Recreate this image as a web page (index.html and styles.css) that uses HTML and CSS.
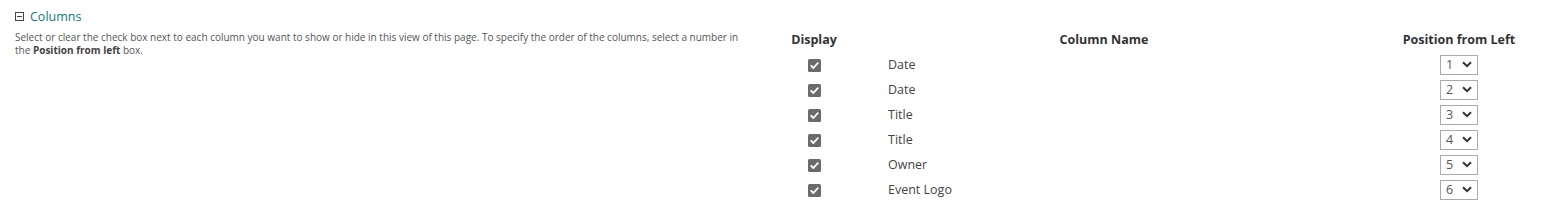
FILE: index.html
```html
<!DOCTYPE html>
<html lang="en">
<head>
    <meta charset="UTF-8">
    <title>Columns</title>
    <link rel="stylesheet" href="styles.css">
</head>
<body>
    <div class="section">
        <div class="left-section">
            <div class="section-title">
                <span class="collapse-icon">
                    <svg width="9" height="9" viewBox="0 0 9 9"><rect x="0.5" y="0.5" width="8" height="8" fill="none" stroke="#444" stroke-width="1"/><rect x="2" y="4" width="5" height="1" fill="#444"/></svg>
                </span>
                Columns
            </div>
            <p class="description">Select or clear the check box next to each column you want to show or hide in this view of this page. To specify the order of the columns, select a number in the <b>Position from left</b> box.</p>
        </div>
        <div class="right-section">
            <table class="columns-table">
                <thead>
                    <tr>
                        <th class="col-display">Display</th>
                        <th class="col-name">Column Name</th>
                        <th class="col-position">Position from Left</th>
                    </tr>
                </thead>
                <tbody id="rows"></tbody>
            </table>
        </div>
    </div>

    <script>
        let columns=["Date","Date","Title","Title","Owner","Event Logo"];
        let rows=document.getElementById("rows");

        columns.forEach((name,index)=>{
            let tr=document.createElement("tr");
            tr.innerHTML=`
            <td class="col-display"><span class="checkbox"><svg width="13" height="13" viewBox="0 0 13 13"><rect width="13" height="13" rx="1.5" fill="#6b6b6b"/><path d="M3.2 6.8 L5.4 9 L9.8 4.2" fill="none" stroke="#fff" stroke-width="1.8" stroke-linecap="round" stroke-linejoin="round"/></svg></span></td>
            <td class="col-name"><span class="name-text">${name}</span></td>
            <td class="col-position"><span class="position-select"><span class="position-value">${index+1}</span><svg width="10" height="7" viewBox="0 0 10 7"><path d="M1 1.2 L5 5.2 L9 1.2" fill="none" stroke="#333" stroke-width="2"/></svg></span></td>`;
            rows.appendChild(tr);
        })
    </script>
</body>
</html>
```

FILE: styles.css
```css
* {
    margin: 0;
    padding: 0;
    box-sizing: border-box;
}

body {
    background-color: #ffffff;
    font-family: "Open Sans", "Noto Sans", sans-serif;
    color: #444444;
}

.section {
    display: flex;
    padding: 7px 0 0 15px;
}

.left-section {
    width: 775px;
}

.section-title {
    display: flex;
    align-items: center;
    font-size: 12.5px;
    color: #0f7b80;
    height: 18px;
}

.collapse-icon {
    display: flex;
    width: 15px;
}

.description {
    width: 728px;
    margin-top: 6px;
    font-size: 10px;
    line-height: 13px;
    color: #555555;
}

.description b {
    color: #444444;
}

.right-section {
    padding-top: 24px;
}

.columns-table {
    border-collapse: collapse;
}

.columns-table th {
    font-size: 12.5px;
    font-weight: bold;
    color: #333333;
    height: 21px;
    line-height: 17px;
    vertical-align: top;
    padding: 0;
}

.columns-table td {
    height: 25px;
    padding: 0;
    font-size: 12.5px;
    color: #444444;
}

.col-display {
    width: 48px;
    text-align: center;
}

.col-name {
    width: 532px;
    text-align: center;
}

td.col-name {
    text-align: left;
    padding-left: 50px !important;
}

.col-position {
    width: 178px;
    text-align: center;
}

.checkbox {
    display: inline-flex;
    vertical-align: middle;
}

.position-select {
    display: inline-flex;
    align-items: center;
    justify-content: space-between;
    width: 38px;
    height: 20px;
    border: 1px solid #ababab;
    padding: 0 5px 0 5px;
    font-size: 12.5px;
    color: #555555;
    vertical-align: middle;
}
```
